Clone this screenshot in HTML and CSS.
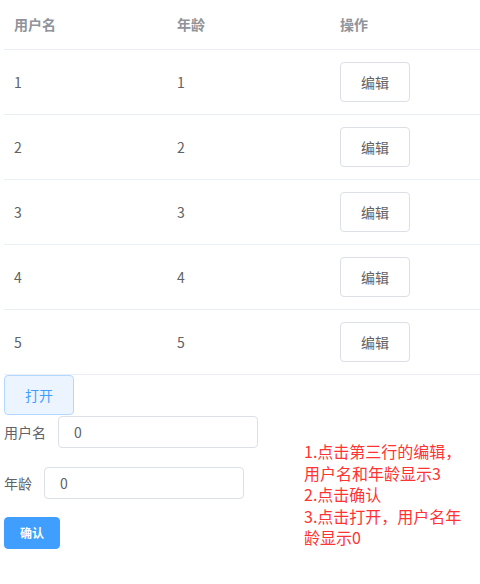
FILE: index.html
```html
<!DOCTYPE html>
<html lang="zh-CN">
<head>
  <meta charset="UTF-8">
  <title>表格编辑</title>
  <link rel="stylesheet" href="styles.css">
</head>
<body>
  <div class="app">
    <table class="user-table">
      <colgroup>
        <col class="col-name">
        <col class="col-age">
        <col>
      </colgroup>
      <thead>
        <tr><th>用户名</th><th>年龄</th><th>操作</th></tr>
      </thead>
      <tbody>
        <tr><td>1</td><td>1</td><td><button class="btn">编辑</button></td></tr>
        <tr><td>2</td><td>2</td><td><button class="btn">编辑</button></td></tr>
        <tr><td>3</td><td>3</td><td><button class="btn">编辑</button></td></tr>
        <tr><td>4</td><td>4</td><td><button class="btn">编辑</button></td></tr>
        <tr><td>5</td><td>5</td><td><button class="btn">编辑</button></td></tr>
      </tbody>
    </table>

    <button class="btn btn-plain">打开</button>

    <div class="bottom">
      <div class="form">
        <div class="form-row first">
          <label>用户名</label>
          <input class="input" type="text" value="0">
        </div>
        <div class="form-row">
          <label>年龄</label>
          <input class="input" type="text" value="0">
        </div>
        <button class="btn btn-primary btn-small">确认</button>
      </div>
      <div class="note">1.点击第三行的编辑，用户名和年龄显示3<br>2.点击确认<br>3.点击打开，用户名年龄显示0</div>
    </div>
  </div>
</body>
</html>
```

FILE: styles.css
```css
body {
  margin: 0;
  font-family: "Noto Sans CJK SC", "Noto Sans", sans-serif;
  font-size: 14px;
  color: #606266;
  background: #fff;
}

.app {
  padding: 0 0 0 4px;
}

.user-table {
  width: 476px;
  border-collapse: collapse;
  table-layout: fixed;
}

.col-name, .col-age {
  width: 163px;
}

.user-table th, .user-table td {
  text-align: left;
  padding: 12px 10px;
  line-height: 23px;
  border-bottom: 1px solid #ebeef5;
}

.user-table th {
  color: #909399;
  font-weight: bold;
  padding-top: 13px;
  padding-bottom: 13px;
}

.user-table td {
  padding-top: 12px;
  padding-bottom: 12px;
}

.btn {
  box-sizing: border-box;
  height: 40px;
  padding: 0 20px;
  border: 1px solid #dcdfe6;
  border-radius: 4px;
  background: #fff;
  color: #606266;
  font-family: inherit;
  font-size: 14px;
  line-height: 38px;
  cursor: pointer;
  display: block;
}

.btn-plain {
  width: 70px;
  background: #ecf5ff;
  border-color: #b3d8ff;
  color: #409eff;
}

.btn-primary {
  background: #409eff;
  border-color: #409eff;
  color: #fff;
}

.btn-small {
  height: 32px;
  line-height: 30px;
  padding: 0 15px;
  font-size: 12px;
  font-weight: bold;
}

.bottom {
  display: flex;
}

.form {
  width: 300px;
}

.form-row {
  display: flex;
  align-items: center;
  gap: 12px;
  margin-top: 19px;
}

.form-row.first {
  margin-top: 1px;
}

.form-row label {
  font-size: 14px;
  color: #606266;
}

.input {
  box-sizing: border-box;
  width: 200px;
  height: 32px;
  padding: 0 15px;
  border: 1px solid #dcdfe6;
  border-radius: 4px;
  font-family: inherit;
  font-size: 14px;
  color: #606266;
  outline: none;
}

.form .btn-small {
  margin-top: 18px;
}

.note {
  width: 168px;
  margin-top: 26px;
  color: #ff3333;
  font-size: 16px;
  line-height: 21.5px;
}
```
